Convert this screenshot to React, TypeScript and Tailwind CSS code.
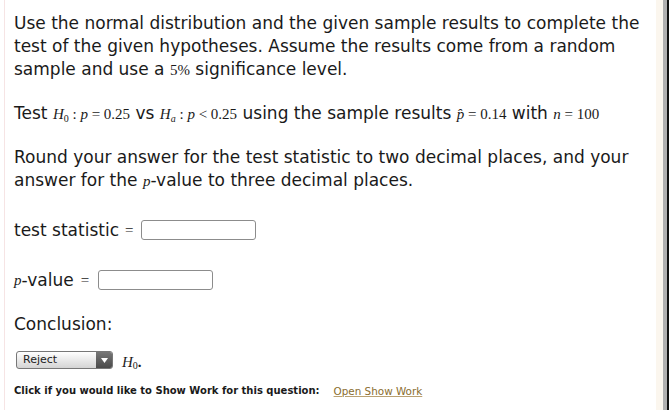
import React from 'react';

const Math: React.FC<{ children: React.ReactNode; className?: string }> = ({ children, className = '' }) => (
  <span className={`font-['Liberation_Serif',serif] text-[15px] leading-none ${className}`}>{children}</span>
);

const I: React.FC<{ children: React.ReactNode }> = ({ children }) => <i className="italic">{children}</i>;

export default function App() {
  return (
    <div className="flex h-screen w-full bg-white text-[#1a1a1a] font-['DejaVu_Sans',Verdana,sans-serif]">
      <div className="flex-1 ml-[4px] border-l border-[#f6e4e4] pl-[9px] pt-[12px]">
        {/* Intro */}
        <p className="text-[17px] leading-[23px]">
          Use the normal distribution and the given sample results to complete the test of the given hypotheses. Assume the
          results come from a random sample and use a <Math className="text-[12px]">5%</Math> significance level.
        </p>

        {/* Hypotheses */}
        <p className="mt-[21px] text-[17px] leading-[23px]">
          Test{' '}
          <Math>
            <I>H</I>
            <sub className="text-[10px] leading-none">0</sub> : <I>p</I> = 0.25
          </Math>{' '}
          vs{' '}
          <Math>
            <I>H</I>
            <sub className="text-[10px] leading-none">
              <I>a</I>
            </sub>{' '}
            : <I>p</I> &lt; 0.25
          </Math>{' '}
          using the sample results{' '}
          <Math>
            <I>p&#770;</I> = 0.14
          </Math>{' '}
          with{' '}
          <Math>
            <I>n</I> = 100
          </Math>
        </p>

        {/* Rounding instructions */}
        <p className="mt-[21px] text-[17px] leading-[23px]">
          Round your answer for the test statistic to two decimal places, and your answer for the{' '}
          <Math>
            <I>p</I>
          </Math>
          -value to three decimal places.
        </p>

        {/* Inputs */}
        <div className="mt-[27px] flex h-[22px] items-center text-[17px] leading-[22px]">
          <span>test statistic</span>
          <Math className="ml-[6px] text-[12px]">=</Math>
          <input className="ml-[8px] h-[20px] w-[115px] rounded-[3px] border border-[#8c8c8c] bg-white" />
        </div>
        <div className="mt-[28px] flex h-[22px] items-center text-[17px] leading-[22px]">
          <Math>
            <I>p</I>
          </Math>
          <span>-value</span>
          <Math className="ml-[7px] text-[12px]">=</Math>
          <input className="ml-[9px] h-[20px] w-[115px] rounded-[3px] border border-[#8c8c8c] bg-white" />
        </div>

        {/* Conclusion */}
        <p className="mt-[22px] text-[17px] leading-[23px]">Conclusion:</p>

        <div className="mt-[15px] ml-[2px] flex h-[18px] items-center">
          <div className="flex h-[18px] w-[97px] overflow-hidden rounded-[3px] border border-[#777] bg-gradient-to-b from-white to-[#d4d4d4]">
            <span className="flex-1 pl-[6px] text-[11px] leading-[16px] text-[#222]">Reject</span>
            <span className="flex w-[16px] items-center justify-center bg-gradient-to-b from-[#777] to-[#4a4a4a]">
              <svg width="7" height="5" viewBox="0 0 7 5">
                <path d="M0 0 L7 0 L3.5 5 Z" fill="#fff" />
              </svg>
            </span>
          </div>
          <Math className="ml-[9px] mt-[4px] text-[15px]">
            <I>H</I>
            <sub className="text-[10px] leading-none">0</sub>
            <span className="font-bold">.</span>
          </Math>
        </div>

        {/* Show work */}
        <div className="mt-[15px] flex h-[14px] items-center text-[10px] leading-[14px]">
          <span className="font-bold">Click if you would like to Show Work for this question:</span>
          <span className="ml-[14px] text-[10.4px] text-[#8a6d2e] underline decoration-[#b9a172]">Open Show Work</span>
        </div>
      </div>

      {/* Right edge frame */}
      <div className="w-[7px] bg-[#fbf6ee]" />
      <div className="w-[4px] bg-[#b0b0b0]" />
      <div className="w-[2px] bg-[#111]" />
    </div>
  );
}
